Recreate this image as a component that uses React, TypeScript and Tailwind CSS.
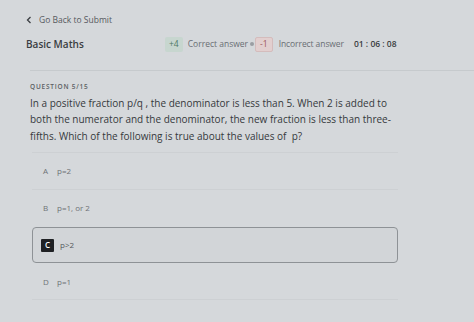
import React from "react";

export default function App() {
  const font = { fontFamily: '"Open Sans", "Noto Sans", sans-serif' };
  return (
    <div className="w-[474px] h-[322px] overflow-hidden bg-[#d5d8db] text-[#3b3e42] whitespace-nowrap" style={font}>
      <div className="pl-[26px] pt-[14px]">
        <div className="flex items-center gap-[7px] h-[12px] text-[8.5px] text-[#55595e]">
          <svg width="6" height="8" viewBox="0 0 6 8"><path d="M4.5 1 L1.5 4 L4.5 7" fill="none" stroke="#3b3e42" strokeWidth="1.3" /></svg>
          <span>Go Back to Submit</span>
        </div>
        <div className="flex items-center mt-[10px] h-[16px]">
          <span className="text-[10px] font-semibold text-[#3a3d41] w-[139px]">Basic Maths</span>
          <span className="h-[15px] px-[4px] flex items-center rounded-[2px] bg-[#c7d6cf] text-[#4e7866] text-[8.5px]">+4</span>
          <span className="ml-[5px] text-[8.5px] text-[#6a6e73]">Correct answer</span>
          <span className="ml-[2px] w-[4px] h-[4px] rounded-full bg-[#9a9ea2]" />
          <span className="ml-[1px] h-[15px] px-[4px] flex items-center rounded-[2px] bg-[#e2cfcf] border border-[#d4bcbc] text-[#a05a5a] text-[8.5px]">-1</span>
          <span className="ml-[6px] text-[8.5px] text-[#6a6e73] tracking-[-0.01em]">Incorrect answer</span>
          <span className="ml-[10px] text-[8.5px] font-semibold text-[#3a3d41]">01 : 06 : 08</span>
        </div>
      </div>
      <div className="ml-[30px] mt-[18px] h-px bg-[#c6cacd]" />
      <div className="pl-[30px]">
        <div className="mt-[11px] text-[6.5px] tracking-[0.12em] font-semibold text-[#5b5f63]">QUESTION 5/15</div>
        <p className="mt-[3px] text-[10px] leading-[16.5px] text-[#35383c]">
          In a positive fraction p/q , the denominator is less than 5. When 2 is added to
          <br />
          both the numerator and the denominator, the new fraction is less than three-
          <br />
          fifths. Which of the following is true about the values of&nbsp; p?
        </p>
        <div className="mt-[8px] w-[366px] flex flex-col gap-[1px] ml-[2px]">
          <div className="h-[36px] flex items-center border-t border-[#cdd0d3] px-[11px] text-[8px] text-[#6e7276]">
            <span className="w-[14px]">A</span><span>p=2</span>
          </div>
          <div className="h-[37px] flex items-center border-t border-[#cdd0d3] px-[11px] text-[8px] text-[#6e7276]">
            <span className="w-[14px]">B</span><span>p=1, or 2</span>
          </div>
          <div className="h-[36px] flex items-center border border-[#8e9296] rounded-[4px] bg-[#d2d5d8] px-[8px] text-[8px] text-[#55595d]">
            <span className="w-[13px] h-[13px] mr-[6px] flex items-center justify-center bg-[#1f2124] text-white font-semibold rounded-[1px]">C</span><span>p&gt;2</span>
          </div>
          <div className="h-[36px] flex items-center border-b border-[#cdd0d3] px-[11px] text-[8px] text-[#6e7276]">
            <span className="w-[14px]">D</span><span>p=1</span>
          </div>
        </div>
      </div>
    </div>
  );
}
